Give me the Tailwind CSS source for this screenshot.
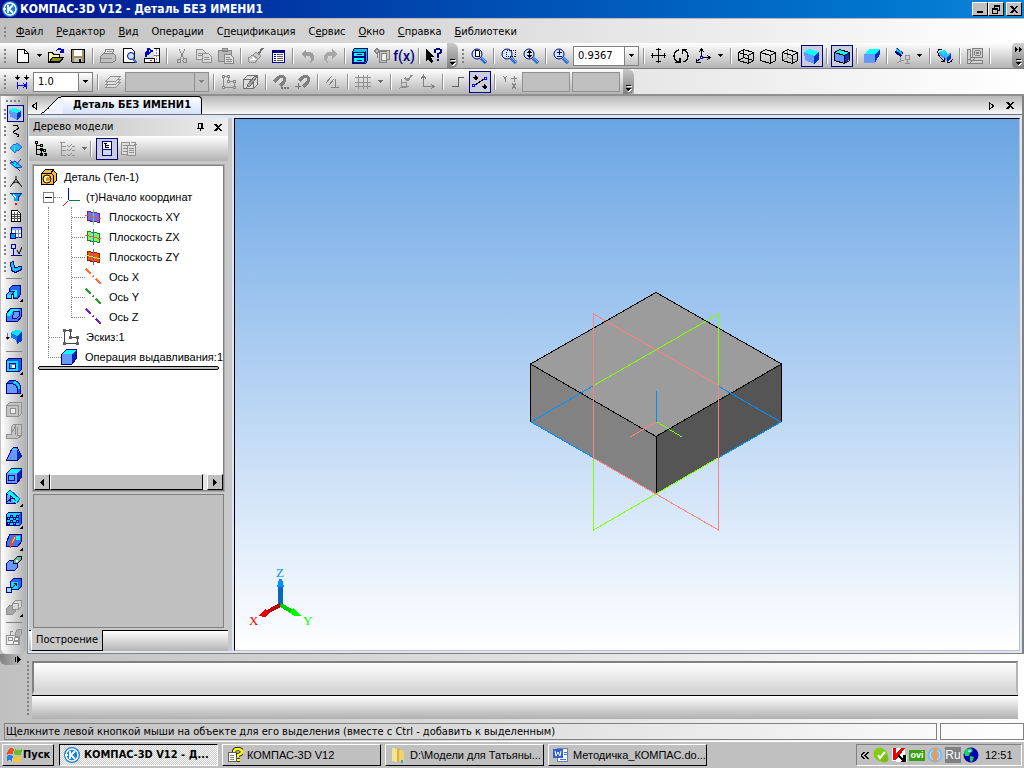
<!DOCTYPE html>
<html lang="ru">
<head>
  <meta charset="UTF-8" />
  <meta name="viewport" content="width=device-width, initial-scale=1.0" />
  <title>КОМПАС-3D V12 - Деталь БЕЗ ИМЕНИ1</title>
  <script src="https://cdn.jsdelivr.net/npm/@tailwindcss/browser@4"></script>
</head>
<body class="flex h-screen flex-col overflow-hidden bg-linear-to-r from-[#c0c0c0] to-white font-['DejaVu_Sans_Condensed','DejaVu_Sans',sans-serif] text-[11px] leading-4 text-black [&_svg]:shrink-0 [&_svg]:[shape-rendering:crispEdges]">

  <!-- Общие значки -->
  <svg class="hidden">
    <symbol id="lens" viewBox="0 0 16 16"><g shape-rendering="auto"><circle cx="6" cy="6" r="5" fill="#cfeaff" stroke="#000080"/><path d="M10 10l5 5" stroke="#2a6fd8" stroke-width="3.500"/><path d="M10 9l5 5" stroke="#8cc0f8"/></g></symbol>
    <symbol id="arrow" viewBox="0 0 5 3"><path d="M0 0h5v1H4v1H3v1H2V2H1V1H0z" fill="currentColor"/></symbol>
    <symbol id="cube" viewBox="0 0 16 16"><path d="M1 5l5-4h9l-4 4z" fill="#00ffff"/><path d="M1 5h10v10H1z" fill="#6699ff"/><path d="M11 5l4-4v9l-4 5z" fill="#0020c8"/><path d="M.5 5.500l5-5h10v9l-5 6H.5z" fill="none" stroke="#000080"/></symbol>
    <symbol id="shaded" viewBox="0 0 16 16"><path d="M0 4l5-3 10 3v1l-5 3z" fill="#00ffff"/><path d="M0 4l10 4v8L1 12z" fill="#6699ff"/><path d="M10 8l5-4v8l-5 4z" fill="#0033cc"/></symbol>
    <symbol id="kompas" viewBox="0 0 16 16"><circle cx="8" cy="8" r="8" fill="#1a7fd0"/><circle cx="8" cy="8" r="6" fill="none" stroke="#fff" stroke-width="1.4"/><path d="M6 4v8M11 4L7 8l4 4M1 8h3" fill="none" stroke="#fff" stroke-width="1.8"/></symbol>
    <symbol id="overflow" viewBox="0 0 7 8"><path d="M1 1h5v1H1zM1 4h5v1H5v1H4v1H3V6H2V5H1z" fill="#000"/><path d="M2 2h5v1H2zM5 5h2v1H5zM4 6h2v1H4zM3 7h2v1H3z" fill="#fff"/></symbol>
  </svg>

  <!-- Заголовок окна -->
  <header class="flex h-[18px] shrink-0 items-center bg-linear-to-r from-[#001090] to-[#1084d8] px-0.5 text-white">
    <svg class="size-4 [shape-rendering:auto]!"><use href="#kompas"/></svg>
    <h1 class="flex-1 pl-0.5 text-[12px] font-bold">КОМПАС-3D V12 - Деталь БЕЗ ИМЕНИ1</h1>
    <div class="flex [&>button]:flex [&>button]:h-[14px] [&>button]:w-4 [&>button]:items-center [&>button]:justify-center [&>button]:border [&>button]:border-t-white [&>button]:border-r-black [&>button]:border-b-black [&>button]:border-l-white [&>button]:bg-[#c0c0c0]">
      <button aria-label="Свернуть"><svg class="h-2 w-2" viewBox="0 0 8 8"><path d="M1 6h6v2H1z"/></svg></button>
      <button aria-label="Восстановить"><svg class="h-[9px] w-[9px]" viewBox="0 0 9 9"><path d="M2 0h6v2H2zM7 2h1v4H6V5h1zM2 2h1v1H2zM0 3h6v2H0zM0 5h1v4H0zM5 5h1v4H5zM1 8h4v1H1z"/></svg></button>
      <button aria-label="Закрыть" class="ml-0.5"><svg class="h-[7px] w-2" viewBox="0 0 8 7"><path d="M0 0h2l2 2 2-2h2L5 3.500l3 3.500H6L4 5 2 7H0l3-3.500z"/></svg></button>
    </div>
  </header>

  <!-- Главное меню -->
  <nav class="flex h-[25px] shrink-0 items-center border-t border-[#b8b8b8] pt-0.5 pl-1 [&>a]:ml-[13px]">
    <span class="h-[11px] w-0.5 bg-[repeating-linear-gradient(#808080_0_2px,transparent_2px_4px)]"></span>
    <a href="#" class="ml-2.5!"><u>Ф</u>айл</a>
    <a href="#"><u>Р</u>едактор</a>
    <a href="#"><u>В</u>ид</a>
    <a href="#">Опера<u>ц</u>ии</a>
    <a href="#">С<u>п</u>ецификация</a>
    <a href="#">С<u>е</u>рвис</a>
    <a href="#"><u>О</u>кно</a>
    <a href="#"><u>С</u>правка</a>
    <a href="#"><u>Б</u>иблиотеки</a>
  </nav>

  <!-- Панели инструментов -->
  <div class="flex h-[26px] shrink-0 border-b border-[#808080] [&_button]:flex [&_button]:h-[22px] [&_button]:w-[22px] [&_button]:shrink-0 [&_button]:items-center [&_button]:justify-center [&_hr]:mx-[3px] [&_hr]:h-4 [&_hr]:w-0.5 [&_hr]:shrink-0 [&_hr]:border-t-0 [&_hr]:border-r [&_hr]:border-l [&_hr]:border-r-white [&_hr]:border-l-[#909090]">
    <div class="flex shrink-0 items-center bg-linear-to-b from-white to-[#b4b4b4]">
      <span class="mr-1.5 ml-1 h-[14px] w-0.5 bg-[repeating-linear-gradient(#808080_0_2px,transparent_2px_4px)]"></span>
      <button aria-label="Создать"><svg class="size-4" viewBox="0 0 16 16"><path d="M2.500 1.500h7l4 4v9h-11z" fill="#fff" stroke="#000"/><path d="M9.500 1.500v4h4" fill="none" stroke="#000"/></svg></button>
      <button aria-label="Виды документов" class="w-[11px]!"><svg class="h-[3px] w-[5px]"><use href="#arrow"/></svg></button>
      <button aria-label="Открыть"><svg class="size-4" viewBox="0 0 16 16"><path d="M.5 13.500v-9h4l1 2h6v3h4l-4 5H.5z" fill="#fff9a0" stroke="#000"/><path d="M1.500 13.500l3-4h11l-4 4z" fill="#909020" stroke="#000"/><path d="M8 3l2-2h3l2 3m-3 0h3V1" fill="none" stroke="#0000c0" stroke-width="1.300"/></svg></button>
      <button aria-label="Сохранить"><svg class="size-4" viewBox="0 0 16 16"><path d="M1.500 1.500h13v13h-12l-1-1z" fill="#a09060" stroke="#000"/><path d="M4 2h8v6H4z" fill="#fff"/><path d="M4 10h8v4H4z" fill="#c0c0c0"/><path d="M9 11h2v3H9z"/></svg></button>
      <hr>
      <button aria-label="Печать"><svg class="size-4" viewBox="0 0 16 16"><path d="M4 7l2-6h8l-2 6z" fill="#e8e8e8" stroke="#808080"/><path d="M.5 8.500l3-3h10l2 2v5l-3 2H.5z" fill="#c0c0c0" stroke="#808080"/><path d="M1 10.500h11M7 3.500h5" stroke="#909090"/></svg></button>
      <button aria-label="Просмотр"><svg class="size-4" viewBox="0 0 16 16"><path d="M1.500.5h8l3 3v11h-11z" fill="#fff" stroke="#000"/><circle cx="9" cy="8" r="3.500" fill="#c8e4ff" stroke="#000080" shape-rendering="auto"/><path d="M11 11l4 4" stroke="#3070d0" stroke-width="2.500"/></svg></button>
      <button aria-label="Вывод в файл"><svg class="size-4" viewBox="0 0 16 16"><path d="M9.500.5h6v14h-6" fill="#fff" stroke="#000"/><path d="M12.500 1v13M10 7.500h5" stroke="#808080" stroke-dasharray="2 1"/><path d="M.5 10.500h10v4H.5z" fill="#fff" stroke="#000"/><path d="M6 12h2v1H6z" fill="red"/><path d="M2 9V5q0-2 2-2M4 0l4 3-4 3z" fill="none" stroke="#0000c0" stroke-width="1.500"/></svg></button>
      <hr>
      <button aria-label="Вырезать"><svg class="size-4" viewBox="0 0 16 16" fill="none" stroke="#888"><path d="M5 1l5 10M11 1L6 11"/><circle cx="5" cy="13" r="2"/><circle cx="11" cy="12.500" r="2"/></svg></button>
      <button aria-label="Копировать"><svg class="size-4" viewBox="0 0 16 16" fill="#dcdcdc" stroke="#909090"><path d="M.5 1.500h6l3 3v7h-9zM2 5.500h4M2 7.500h4"/><path d="M6.500 5.500h6l3 3v6h-9zM8 9.500h5M8 11.500h6"/></svg></button>
      <button aria-label="Вставить"><svg class="size-4" viewBox="0 0 16 16" fill="#b8b8b8" stroke="#888"><path d="M.5 2.500h13v11H.5zM4.500.5h5v3h-5z"/><path d="M6.500 6.500h6l3 3v6h-9z" fill="#ddd"/><path d="M8 9.500h4M8 11.500h6M8 13.500h6"/></svg></button>
      <hr>
      <button aria-label="Копировать свойства"><svg class="size-4" viewBox="0 0 16 16"><path d="M15 0l-5 6" stroke="#707070" stroke-width="2"/><path d="M8 4l5 4-3 3-5-4zM5 7l5 4-3 4-6-1-1-4z" fill="#c8c8c8" stroke="#909090"/><path d="M2 11l4 1M4 9l4 3" stroke="#fff"/></svg></button>
      <button aria-label="Свойства"><svg class="size-4" viewBox="0 0 16 16"><path d="M2.500 2.500h12v12h-12z" fill="#fff" stroke="#000080"/><path d="M2 2h13v3H2z" fill="#000080"/><path d="M4 6.500h2M4 8.500h2M4 10.500h2M4 12.500h2" stroke="#00c"/><path d="M7 6.500h6M7 8.500h6M7 10.500h6M7 12.500h6" stroke="#606060"/></svg></button>
      <hr>
      <button aria-label="Отменить"><svg class="size-4" viewBox="0 0 16 16"><path d="M6 1v3h4q4 1 4 6 0 3-4 5 2-6-1-7H6v3L1 6z" fill="#9c9c9c"/></svg></button>
      <button aria-label="Повторить"><svg class="size-4" viewBox="0 0 16 16"><path d="M10 1v3H6q-4 1-4 6 0 3 4 5-2-6 1-7h3v3l5-5z" fill="#a8a8a8"/></svg></button>
      <hr>
      <button aria-label="Менеджер библиотек"><svg class="size-4" viewBox="0 0 16 16"><path d="M.5 3.500l2-3h13v12l-2 3H.5z" fill="#00c8d0" stroke="#000080"/><path d="M1.500 4.500h11v4h-11zM1.500 9.500h11v5h-11z" fill="#00ffff" stroke="#000080"/><path d="M4.500 6.500h5M4.500 12.500h5M13.500 3v11" stroke="#000080"/></svg></button>
      <button aria-label="Дерево"><svg class="size-4" viewBox="0 0 16 16" fill="#c8c8c8" stroke="#808080"><path d="M5.500 2.500h10v9h-3v3h-7z"/><path d="M7.500 5.500h5v7h-5z" fill="#eee"/><circle cx="3" cy="3" r="2" stroke-width="1.500"/><path d="M5 3h8M3.500 5v5"/></svg></button>
      <button aria-label="Переменные" class="font-['Roboto'] text-[14px] font-medium text-[#000080]">f(x)</button>
      <hr>
      <button aria-label="Справка"><svg class="h-4 w-[17px]" viewBox="0 0 17 16"><path d="M0 1l8 8H5l2 4-2 2-3-4-2 2z"/><path d="M9 5V3q0-2 3-2t3 2q0 2-3 3v4M11 12h2" fill="none" stroke="#000080" stroke-width="2"/></svg></button>
      <span class="ml-0.5 flex h-full w-[11px] items-end justify-center rounded-r-md bg-linear-to-b from-[#c8c8c8] to-[#808080] pb-0.5"><svg class="h-2 w-[7px]"><use href="#overflow"/></svg></span>
    </div>

    <div class="flex flex-1 items-center bg-linear-to-b from-white to-[#b4b4b4]">
      <span class="mr-1 ml-1 h-[14px] w-0.5 bg-[repeating-linear-gradient(#808080_0_2px,transparent_2px_4px)]"></span>
      <button aria-label="Показать все"><svg class="size-4" viewBox="0 0 16 16"><use href="#lens"/><path d="M4.500 2.500h3l1 1v5h-4z" fill="#fff" stroke="#000"/></svg></button>
      <hr>
      <button aria-label="Увеличить рамкой"><svg class="size-4" viewBox="0 0 16 16"><use href="#lens"/><path d="M5.500 2.500h9v6h-9z" fill="none" stroke="#000" stroke-dasharray="1 1"/></svg></button>
      <button aria-label="Масштаб"><svg class="size-4" viewBox="0 0 16 16"><use href="#lens"/><path d="M6 2h1v8H6zM5 3h3v1H5zM4 4h5v1H4zM4 7h5v1H4zM5 8h3v1H5z"/></svg></button>
      <hr>
      <button aria-label="Масштаб по значению"><svg class="size-4" viewBox="0 0 16 16"><use href="#lens"/><path d="M6.500 2v5M4 4.500h5M4 8.500h5" stroke="#000080"/></svg></button>
      <div class="relative mx-px h-5 w-[66px] shrink-0">
        <select aria-label="Текущий масштаб" class="h-5 w-full appearance-none border border-[#808080] bg-white pl-1"><option>0.9367</option></select>
        <span class="pointer-events-none absolute inset-y-px right-px flex w-[14px] items-center justify-center border-l border-[#808080] bg-linear-to-b from-white to-[#c4c4c4]"><svg class="h-[3px] w-[5px]"><use href="#arrow"/></svg></span>
      </div>
      <hr>
      <button aria-label="Сдвинуть"><svg class="size-4" viewBox="0 0 16 16"><path d="M7 2v5H2V5H1v2H0v1h1v2h1V8h5v5H5v1h2v1h1v-1h2v-1H8V8h5v2h1V8h1V7h-1V5h-1v2H8V2h2V1H8V0H7v1H5v1z"/></svg></button>
      <button aria-label="Повернуть"><svg class="size-4" viewBox="0 0 16 16" fill="none" stroke="#000" stroke-width="1.300"><path d="M6 2Q1 3 1 8t5 6M2 14.500h5V10M10 14q5-1 5-6t-5-6M14 1.500H9.500V6"/></svg></button>
      <button aria-label="Ориентация"><svg class="size-4" viewBox="0 0 16 16" fill="none" stroke="#000"><path d="M6.500 9V1M4 4l2.500-3L9 4M7 9.500h8M12 7l3 2.500L12 12M6 10l-5 4M1.500 11v3.500h4"/><path d="M5.500 8.500h2v2h-2z" fill="#fff" stroke="#00f"/></svg></button>
      <button aria-label="Список ориентаций" class="w-[13px]!"><svg class="h-[3px] w-[5px]"><use href="#arrow"/></svg></button>
      <hr>
      <button aria-label="Каркас"><svg class="size-4" viewBox="0 0 16 16" fill="none" stroke="#000"><path d="M.5 4.500l5-3 10 3v8l-5 3-10-3zM.5 4.500l10 3v8M10.500 7.500l5-3M5.500 1.500v8l10 3M5.500 9.500l-5 3"/></svg></button>
      <button aria-label="Без невидимых линий"><svg class="size-4" viewBox="0 0 16 16" fill="none" stroke="#000"><path d="M.5 4.500l5-3 10 3v8l-5 3-10-3zM.5 4.500l10 3v8M10.500 7.500l5-3"/></svg></button>
      <button aria-label="Невидимые линии тонкие"><svg class="size-4" viewBox="0 0 16 16" fill="none" stroke="#000"><path d="M5.500 1.500v8l10 3M5.500 9.500l-5 3" stroke="#909090"/><path d="M.5 4.500l5-3 10 3v8l-5 3-10-3zM.5 4.500l10 3v8M10.500 7.500l5-3"/></svg></button>
      <button aria-label="Полутоновое" aria-pressed="true" class="border border-[#000080] bg-[#ccccdf]"><svg class="size-4"><use href="#shaded"/></svg></button>
      <hr>
      <button aria-label="Полутоновое с каркасом" aria-pressed="true" class="border border-[#000080] bg-[#ccccdf]"><svg class="size-4" viewBox="0 0 16 16"><use href="#shaded"/><path d="M.5 4.500l5-3 10 3v8l-5 3-10-3zM.5 4.500l10 3v8M10.500 7.500l5-3" fill="none" stroke="#000"/></svg></button>
      <hr>
      <button aria-label="Упрощенное"><svg class="size-4" viewBox="0 0 16 16"><path d="M0 6L6 1h10l-5 5z" fill="#00ffff"/><path d="M0 6h11v9H0z" fill="#6699ff"/><path d="M11 6l5-5v5l-5 9z" fill="#0033cc"/></svg></button>
      <hr>
      <button aria-label="Перспектива"><svg class="size-4" viewBox="0 0 16 16"><path d="M2 2l6 5" stroke="#000080" stroke-width="5"/><path d="M2 1l6 5" stroke="#00c8ff" stroke-width="2"/><path d="M11.500 7.500h4v4h-4zM13.500 12v3M11 15.500h5M6.500 9v4l-3 2M6 12.500h4" fill="none" stroke="#909090"/></svg></button>
      <button aria-label="Параметры вида" class="w-[13px]!"><svg class="h-[3px] w-[5px]"><use href="#arrow"/></svg></button>
      <hr>
      <button aria-label="Перестроить"><svg class="size-4" viewBox="0 0 16 16"><path d="M2 4l5-2 3 4 4-1v5l-4 4-4-4-3-2z" fill="#5090ff"/><path d="M2 4l5-2 3 3-4 3zM7 8l4-2h3l-4 3z" fill="#00e0ff"/><path d="M10 9l4-3v4l-4 4z" fill="#0030d0"/><path d="M5 1Q0 1 1 5t6 8M15 10q1 4-5 5M4 13.500h3.500V10" fill="none" stroke="#000"/></svg></button>
      <hr>
      <button aria-label="Библиотека"><svg class="size-4" viewBox="0 0 16 16" fill="#d0d0d0" stroke="#808080"><path d="M.5 1.500h3v11h12v3h-15zM5.500.5h10v9h-10z"/><circle cx="10.500" cy="5" r="3"/><circle cx="10.500" cy="5" r="1"/><path d="M1 12l5-3M3 15l5-5"/></svg></button>
      <hr>
      <span class="ml-auto flex h-full w-3 flex-col items-center justify-between rounded-l-sm bg-linear-to-b from-[#d0d0d0] to-[#808080] pt-1 pb-0.5"><svg class="h-[5px] w-[7px]" viewBox="0 0 7 5"><path d="M0 0l3 2.500L0 5zM4 0l3 2.500L4 5z"/></svg><svg class="h-2 w-[7px]"><use href="#overflow"/></svg></span>
    </div>
  </div>

  <div class="flex h-[27px] shrink-0 border-b-2 border-[#909090] [&_button]:flex [&_button]:h-[22px] [&_button]:w-[22px] [&_button]:shrink-0 [&_button]:items-center [&_button]:justify-center [&_hr]:mx-[3px] [&_hr]:h-4 [&_hr]:w-0.5 [&_hr]:shrink-0 [&_hr]:border-t-0 [&_hr]:border-r [&_hr]:border-l [&_hr]:border-r-white [&_hr]:border-l-[#909090]">
    <div class="flex shrink-0 items-center bg-linear-to-b from-white to-[#b4b4b4]">
      <span class="mr-[5px] ml-1 h-[14px] w-0.5 bg-[repeating-linear-gradient(#808080_0_2px,transparent_2px_4px)]"></span>
      <button aria-label="Шаг курсора"><svg class="size-4" viewBox="0 0 16 16" fill="none"><path d="M1 3.500h5M3.500 1v5M10 3.500h5M12.500 1v5" stroke="#000"/><path d="M2 2.500h3v2H2zM11 2.500h3v2h-3z" fill="#000"/><path d="M3.500 8v7M12.500 8v7M4 11.500h8M9 9l3 2.500L9 14" stroke="#00f"/></svg></button>
      <div class="relative mr-px h-5 w-[60px] shrink-0">
        <select aria-label="Шаг" class="h-5 w-full appearance-none border border-[#808080] bg-white pl-1"><option>1.0</option></select>
        <span class="pointer-events-none absolute inset-y-px right-px flex w-[14px] items-center justify-center border-l border-[#808080] bg-linear-to-b from-white to-[#c4c4c4]"><svg class="h-[3px] w-[5px]"><use href="#arrow"/></svg></span>
      </div>
      <hr>
      <button aria-label="Слои"><svg class="size-4" viewBox="0 0 16 16" fill="#e0e0e0" stroke="#909090"><path d="M5.500 8.500h10l-5 5H.5z"/><path d="M5.500 5.500h10l-5 5H.5z"/><path d="M5.500 2.500h10l-5 5H.5z"/></svg></button>
      <div class="relative mx-px h-5 w-[84px] shrink-0">
        <select aria-label="Слой" disabled class="h-5 w-full appearance-none border border-[#909090] bg-[#c0c0c0]"></select>
        <span class="pointer-events-none absolute inset-y-px right-px flex w-[14px] items-center justify-center border-l border-[#909090] text-[#808080]"><svg class="h-[3px] w-[5px]"><use href="#arrow"/></svg></span>
      </div>
      <hr>
      <button aria-label="Эскиз"><svg class="size-4" viewBox="0 0 16 16" fill="#888" stroke="#888"><path d="M2.500 2.500h5v5h6v6h-11z" fill="none"/><path d="M1.500 1.500h2v2h-2zM6.500 1.500h2v2h-2zM6.500 6.500h2v2h-2zM12.500 6.500h2v2h-2zM1.500 12.500h2v2h-2zM12.500 12.500h2v2h-2z" fill="#ddd"/></svg></button>
      <button aria-label="Правка эскиза"><svg class="size-4" viewBox="0 0 16 16" fill="#ddd" stroke="#707070"><path d="M.5 5.500l4-4h10v9l-4 4H.5zM.5 5.500h10v9M10.500 5.500l4-4"/><path d="M12 2l2 1-7 9-3 1 1-3z" fill="#aaa"/></svg></button>
      <hr>
      <button aria-label="Привязки"><svg class="size-4" viewBox="0 0 16 16"><path d="M1 8l5-5q3-2 5 0t0 5l-4 4" fill="none" stroke="#808080" stroke-width="3"/><path d="M8 13h2v2H8zM11 13h2v2h-2zM14 13h2v2h-2z" fill="#707070"/></svg></button>
      <button aria-label="Запретить привязки"><svg class="size-4" viewBox="0 0 16 16"><path d="M4 7l4-4q3-2 5 0t0 5l-5 5" fill="none" stroke="#808080" stroke-width="3"/><path d="M0 12.500h6M3.500 9v6" stroke="#707070"/></svg></button>
      <hr>
      <button aria-label="Ортогональность"><svg class="size-4" viewBox="0 0 16 16" fill="none" stroke="#808080"><path d="M1 9l6-7M4 11l5-6M10.500 5v9M6 13.500h8"/></svg></button>
      <hr>
      <button aria-label="Сетка"><svg class="size-4" viewBox="0 0 16 16" fill="none" stroke="#909090"><path d="M0 3.500h16M0 8.500h16M0 12.500h16M3.500 1v14M8.500 1v14M12.500 1v14"/></svg></button>
      <button aria-label="Параметры сетки" class="w-[13px]!"><svg class="h-[3px] w-[5px] text-[#707070]"><use href="#arrow"/></svg></button>
      <hr>
      <button aria-label="Локальная СК"><svg class="size-4" viewBox="0 0 16 16" fill="none" stroke="#909090"><path d="M3.500 5v7h7M4 12l-3 3M2.500 8.500h6v5h-6M6 4l3 3 5-6"/><path d="M7 4l3 2 4-5" stroke-width="2"/></svg></button>
      <button aria-label="Система координат"><svg class="size-4" viewBox="0 0 16 16" fill="none" stroke="#808080"><path d="M3.500 2v10.500H14M1 5l2.500-4L6 5M11 10l3 2.500-3 2.500"/></svg></button>
      <hr>
      <button aria-label="Ломаная"><svg class="size-4" viewBox="0 0 16 16" fill="none" stroke="#606060"><path d="M2 12.500h6.500v-9H14"/></svg></button>
      <button aria-label="Округление" aria-pressed="true" class="border border-[#000080] bg-[#ccccdf]"><svg class="size-4" viewBox="0 0 16 16" fill="none" stroke="#000"><path d="M3 11l9-6M1 3.500h5M3.500 1v5M10 12.500h5M12.500 10v5"/><path d="M3 2h1v3H3zM2 3h3v1H2zM12 11h1v3h-1zM11 12h3v1h-3z"/><path d="M.5 10.500h2v2h-2zM12.500 3.500h2v2h-2z" fill="#fff" stroke="#00f"/></svg></button>
      <hr>
      <button aria-label="Координаты"><svg class="size-4" viewBox="0 0 16 16" fill="none" stroke="#808080"><path d="M1 2l2 2.500V8M5 2L3 4.500M10 9l4 6M14 9l-4 6M9 4.500h6M12.500 2v6"/></svg></button>
      <input aria-label="Координата X" disabled class="mx-px h-5 w-12 border border-[#909090] bg-[#c0c0c0]" />
      <input aria-label="Координата Y" disabled class="mx-px h-5 w-12 border border-[#909090] bg-[#c0c0c0]" />
      <span class="ml-0.5 flex h-full w-[11px] items-end justify-center rounded-r-md bg-linear-to-b from-[#c8c8c8] to-[#808080] pb-0.5"><svg class="h-2 w-[7px]"><use href="#overflow"/></svg></span>
    </div>
  </div>

  <main class="flex min-h-0 flex-1">
    <!-- Компактная панель -->
    <aside class="flex w-[27px] shrink-0 flex-col pb-[54px]">
      <div class="ml-px flex min-h-0 w-[25px] flex-1 flex-col items-center rounded-b-md bg-linear-to-r from-white to-[#b0b0b0] pt-1 [&>button]:flex [&>button]:h-[22px] [&>button]:w-full [&>button]:shrink-0 [&>button]:items-center [&>button]:justify-center [&>hr]:my-[3px] [&>hr]:w-4 [&>hr]:border-[#808080]">
        <span class="mb-[3px] h-0.5 w-4 shrink-0 bg-[repeating-linear-gradient(90deg,#808080_0_2px,transparent_2px_4px)]"></span>
        <!-- Переключатели панелей -->
        <div class="flex w-full shrink-0 flex-col pl-[3px] [&_button]:flex [&_button]:h-[17px] [&_button]:w-[17px] [&_button]:items-center [&_button]:justify-center [&_i]:h-[10px] [&_i]:w-0.5 [&_i]:bg-[repeating-linear-gradient(#808080_0_2px,transparent_2px_4px)] [&>div]:flex [&>div]:h-[17px] [&>div]:items-center [&>div]:gap-px">
          <div><i></i><button aria-label="Редактирование детали" aria-pressed="true" class="border border-[#000080] bg-[#ccccdf]"><svg class="size-[13px]"><use href="#shaded"/></svg></button></div>
          <div><i></i><button aria-label="Кривые"><svg class="size-3" viewBox="0 0 12 12"><path d="M3 .5h4l1.500 2-1 2-3 1-1 2 1 1 4 1v2H7" fill="none" stroke="#000"/></svg></button></div>
          <div><i></i><button aria-label="Поверхности"><svg class="size-3" viewBox="0 0 12 12"><path d="M0 6l4-4 1 1 2-2 5 4-4 4-1-1-2 3z" fill="#30b0ff"/><path d="M0 6l4-4 1 1 2-2 5 4-4 4-1-1-2 3z" fill="none" stroke="#0040c0" stroke-width=".7" shape-rendering="auto"/><path d="M4.500 3v6" stroke="#00ffff"/></svg></button></div>
          <div><i></i><button aria-label="Вспомогательная геометрия"><svg class="size-3" viewBox="0 0 12 12"><path d="M0 4l5-2 7 6-6 1z" fill="#00e0ff"/><path d="M0 4l5-2 7 6-6 1zM11 0L6 6M6 8l4 4M0 1l4 4" fill="none" stroke="#0000c0" stroke-width=".8" shape-rendering="auto"/></svg></button></div>
          <div><i></i><button aria-label="Измерения"><svg class="size-3" viewBox="0 0 12 12" fill="none" stroke="#000"><path d="M6 0v3L0 11M6 3l6 8M2 8q4-4 8 0" shape-rendering="auto"/></svg></button></div>
          <div><i></i><button aria-label="Фильтры"><svg class="size-3" viewBox="0 0 12 12"><path d="M0 0h12v1L8 5v3H4V5L0 1z" fill="#10a0f0"/><path d="M0 .5h12M11 1L8 5v3" fill="none" stroke="#003090"/><path d="M3 1l3 4" stroke="#c0f0ff"/><path d="M5 10h2v2H5z" fill="red"/></svg></button></div>
          <div><i></i><button aria-label="Спецификация"><svg class="size-3" viewBox="0 0 12 12"><path d="M1.500.5h6l3 3v8h-9z" fill="#fff" stroke="#000"/><path d="M2 4.500h8M2 6.500h8M2 8.500h8M4.500 2v9M7.500 2v9" stroke="#505050"/></svg></button></div>
          <div><i></i><button aria-label="Отчеты"><svg class="size-3" viewBox="0 0 12 12"><path d="M1.500.5h10v10h-10z" fill="#fff" stroke="#0000a0"/><path d="M2 1h9v2H2z" fill="#80a8ff"/><path d="M2 6.500h9M8.500 3v8M5.500 3v8" stroke="#8080c0"/><path d="M.5 6.500h5v5h-5z" fill="#00a0f0" stroke="#000080"/></svg></button></div>
          <div><i></i><button aria-label="Оформление"><svg class="size-3" viewBox="0 0 12 12" fill="none" stroke="#0000a0"><path d="M1.500.5h4v4h-4zM3.500 5v6M1 11.500h11"/><path d="M7 6l2 4 3-7" stroke="#000" shape-rendering="auto"/></svg></button></div>
          <div><i></i><button aria-label="Листовое тело"><svg class="size-3" viewBox="0 0 12 12"><path d="M.5 1.500l3-1 1 6 7-1v3l-6 3-4-2z" fill="#00c8ff" stroke="#000080"/></svg></button></div>
        </div>
        <hr>
        <button aria-label="Выдавливание"><svg class="size-[18px]" viewBox="0 0 18 18"><path d="M4.500 4.500l3-3h8v9l-3 4h-4v-4h-4z" fill="#2068f0" stroke="#000080"/><path d="M6 6h6v7H9V9H6z" fill="#00ffff"/><path d="M1.500 10.500l3-3h5l-3 3v4h-5z" fill="#60a0ff" stroke="#000080"/><path d="M2 11h4v3H2z" fill="#00ffff"/><path d="M18 14v4h-4z"/></svg></button>
        <button aria-label="Вырезать выдавливанием"><svg class="size-4" viewBox="0 0 16 16"><path d="M.5 6.500l4-5h11v8l-4 5H.5z" fill="#4080ff" stroke="#000080"/><path d="M5 2h8l-2 3H6L5 9H1V6z" fill="#00ffff"/><path d="M7.500 4.500h6v4l-3 3h-4z" fill="#6699ff" stroke="#000080"/></svg></button>
        <button aria-label="Придать толщину"><svg class="size-4" viewBox="0 0 16 16"><path d="M5 3q5-3 11-1v10l-5 3q0-5-6-6z" fill="#1878f0"/><path d="M5 3q5-3 11-1l-5 6q-2-3-6-4z" fill="#00e0ff"/><path d="M11 8l5-6v10l-5 3z" fill="#0038c8"/><path d="M1.500 4v6M0 8h3v1H2v1H1V9H0z" stroke="#000" stroke-width=".5"/></svg></button>
        <hr>
        <button aria-label="Отверстие"><svg class="size-[18px]" viewBox="0 0 18 18"><path d="M1.500 3.500l2-2h13v11l-2 2h-13z" fill="#1060e0" stroke="#000080"/><path d="M2 4h11v10H2z" fill="#00e0ff"/><path d="M4.500 6.500h6v5h-6z" fill="#6090ff" stroke="#000080"/><path d="M7 8h3v3H7z" fill="#fff"/><path d="M18 14v4h-4z"/></svg></button>
        <button aria-label="Скругление"><svg class="size-[18px]" viewBox="0 0 18 18"><path d="M1.500 4.500l3-3h5q6 1 6 8v5h-14z" fill="#0060ff" stroke="#000080"/><path d="M9 2q6 1 6 8h-2q0-5-5-6z" fill="#00e0ff"/><path d="M1.500 4.500h5q5 1 6 6v4h-11z" fill="#6699ff" stroke="#000080"/><path d="M18 14v4h-4z"/></svg></button>
        <button aria-label="Отверстие из библиотеки"><svg class="size-4" viewBox="0 0 16 16" fill="#c4c4c4" stroke="#909090"><path d="M.5 3.500l3-3h12v11l-3 3H.5zM.5 3.500h12v11"/><circle cx="7" cy="9" r="3" fill="#eee"/></svg></button>
        <button aria-label="Ребро жесткости"><svg class="size-4" viewBox="0 0 16 16" fill="#c4c4c4" stroke="#909090"><path d="M5.500 2.500l2-2h8v11l-4 3H.5v-4h5z"/><path d="M5 10l4-7v8M11.500 3v8h3" fill="none"/></svg></button>
        <button aria-label="Уклон"><svg class="size-4" viewBox="0 0 16 16"><path d="M5.500 3.500l2-2h4l4 9-4 4H.5z" fill="#6699ff" stroke="#000080"/><path d="M11 3l4 7-4 4z" fill="#0030c0"/><path d="M6 3.500h4" stroke="#00ffff"/></svg></button>
        <button aria-label="Оболочка"><svg class="size-4" viewBox="0 0 16 16"><use href="#cube"/><path d="M2.500 7.500h6v5h-6z" fill="#00d0ff" stroke="#000080"/><path d="M3 12l3-3h2v3z" fill="#6699ff"/></svg></button>
        <button aria-label="Сечение"><svg class="size-[18px]" viewBox="0 0 18 18"><path d="M1.500 4.500l4 2 5 8h-9z" fill="#6699ff" stroke="#000080"/><path d="M2 4l3-3 10 9-3 4-4-1z" fill="#00ffff"/><path d="M2 4l3-3 10 9-3 4" fill="none" stroke="#0050c0"/><path d="M5.500 6v7M5 6l6 6M2 13l5-4h3" fill="none" stroke="#000080"/><path d="M18 14v4h-4z"/></svg></button>
        <button aria-label="Массив по сетке"><svg class="size-[18px]" viewBox="0 0 18 18"><path d="M1.500 3.500l2-2h13v11l-2 2h-13z" fill="#00d8ff" stroke="#000080"/><path d="M13 4l3-2v10l-2 2z" fill="#1060f0"/><g fill="#80a8ff" stroke="#000080"><path d="M2.500 6.500h2v2h-2zM8.500 6.500h2v2h-2zM2.500 11.500h2v2h-2zM8.500 11.500h2v2h-2zM5.500 4.500h2v2h-2zM11.500 4.500h2v2h-2zM5.500 9.500h2v2h-2zM11.500 9.500h2v2h-2z"/></g><path d="M18 14v4h-4z"/></svg></button>
        <button aria-label="Линия разъема"><svg class="size-[18px]" viewBox="0 0 18 18"><path d="M1.500 9.500l3-8h12v7l-4 5h-11z" fill="#3878f0" stroke="#000080"/><path d="M11 3h4v4h-4z" fill="#00ffff"/><path d="M5 16V9l5-7h2L9 9z" fill="#ff4020"/><path d="M10 4l-3 6" stroke="#ffe060"/><path d="M18 14v4h-4z"/></svg></button>
        <button aria-label="Деталь-заготовка"><svg class="size-4" viewBox="0 0 16 16"><path d="M.5 7.500l3-3h8v7l-3 3h-8z" fill="#6699ff" stroke="#000080"/><path d="M8 8l-1-3 4-4 4-1 1 3-4 4z" fill="#60c0b0" stroke="#000"/><path d="M10 4h2v2h-2z" fill="#fff"/></svg></button>
        <button aria-label="Булева операция"><svg class="size-4" viewBox="0 0 16 16"><path d="M4.500 3.500l3-3h8v8l-3 3h-8z" fill="#2068f0" stroke="#000080"/><path d="M5 4h7v7H5z" fill="#00e0ff"/><path d="M.5 9.500h5v5h-5z" fill="#8fdcff" stroke="#000080"/><path d="M6 10l4-4M8 5.500h2.500V8" stroke="#000" fill="none"/></svg></button>
        <button aria-label="Масштабирование"><svg class="size-[18px]" viewBox="0 0 18 18"><g fill="#d8d8d8" stroke="#909090"><path d="M1.500 9.500l3-3h6v6l-3 3h-6z" fill="#a8a8a8"/><path d="M7.500 4.500l3-3h6v6l-3 3h-6zM7.500 4.500h6v6"/></g><path d="M18 14v4h-4z"/></svg></button>
        <hr>
        <button aria-label="Компоновка"><svg class="size-4" viewBox="0 0 16 16" fill="#f0f0f0" stroke="#909090"><path d="M.5 6.500h13v9H.5zM2.500 8.500h4v3h-4zM8.500 8.500h4v3h-4zM7.500 12.500h5v3h-5z"/><path d="M9.500 3.500l2-3h4v5l-2 2h-4z" fill="#b0b0b0"/><path d="M4.500 6V2.500H7" fill="none"/></svg></button>
      </div>
      <span class="flex h-[11px] w-[25px] shrink-0 items-center justify-end rounded-bl-md bg-linear-to-r from-[#808080] to-[#c8c8c8] pr-1"><svg class="h-[7px] w-[6px]" viewBox="0 0 6 7"><path d="M0 1h1v5H0zM2 0l4 3.500L2 7z"/></svg></span>
    </aside>

    <div class="flex min-w-0 flex-1 flex-col">
      <section class="flex min-h-0 flex-1 flex-col border border-t-0 border-r-2 border-[#808080] bg-[#dbe6f8]">
        <!-- Вкладки документов -->
        <div class="flex h-[19px] shrink-0 items-end border-b border-[#707070] bg-linear-to-b from-[#b8b8b8] to-[#f8f8f8]">
          <button aria-label="Влево" class="flex h-[17px] w-[13px] items-center justify-center"><svg class="h-2 w-[5px]" viewBox="0 0 5 8"><path d="M4.500.5v7L.5 4z" fill="none" stroke="#000"/></svg></button>
          <svg class="h-[18px] w-[22px]" viewBox="0 0 22 18"><path d="M0 18C6 16 14 3 18 1.500L22 .5V18z" fill="#eef3fd"/><path d="M0 17.500C6 16 14 3 18 1.500L22 .5" fill="none" stroke="#000"/></svg>
          <h2 class="h-[18px] rounded-tr-sm border-t border-r border-black bg-linear-to-b from-white to-[#d4e2fa] px-2.5 text-[11px] leading-4 font-bold">Деталь БЕЗ ИМЕНИ1</h2>
          <span class="ml-auto flex h-[17px] items-center gap-3 pr-2">
            <button aria-label="Вправо"><svg class="h-2 w-[5px]" viewBox="0 0 5 8"><path d="M.5.5v7L4.500 4z" fill="none" stroke="#000"/></svg></button>
            <button aria-label="Закрыть документ"><svg class="h-[7px] w-2" viewBox="0 0 8 7"><path d="M0 0h2l2 2 2-2h2L5 3.500l3 3.500H6L4 5 2 7H0l3-3.500z"/></svg></button>
          </span>
        </div>

        <div class="flex min-h-0 flex-1 pt-[3px] pb-0.5">
          <!-- Дерево модели -->
          <div class="ml-px flex w-[203px] shrink-0 flex-col border-r-4 border-[#c8c8c8] bg-[#c8c8c8]">
            <div class="flex h-[18px] shrink-0 items-center bg-linear-to-r from-[#c0c0c0] to-[#ececec] pr-1.5 pl-1">
              <h3 class="flex-1">Дерево модели</h3>
              <button aria-label="Закрепить"><svg class="h-2 w-[7px]" viewBox="0 0 7 8"><path d="M1 0h5v5h1v1H4v2H3V6H0V5h1zM2 1v4h2V1z"/></svg></button>
              <button aria-label="Закрыть дерево" class="ml-2.5"><svg class="h-[7px] w-2" viewBox="0 0 8 7"><path d="M0 0h2l2 2 2-2h2L5 3.500l3 3.500H6L4 5 2 7H0l3-3.500z"/></svg></button>
            </div>
            <div class="flex h-[25px] shrink-0 items-center bg-linear-to-b from-white to-[#b4b4b4] pl-px [&>button]:flex [&>button]:h-[22px] [&>button]:w-[22px] [&>button]:items-center [&>button]:justify-center">
              <button aria-label="Структура"><svg class="h-4 w-3" viewBox="0 0 12 16"><path d="M1.500 2v11.500H5M2 4.500h3M2 8.500h3M6.500 9v5" fill="none" stroke="#000"/><path d="M0 0h3v3H0zM4.500 3h3v3h-3zM4.500 7h3v3h-3zM8 8h3v3H8zM4.500 12h3v3h-3zM8.500 12h3v3h-3z"/><path d="M1 1h1v1H1zM6 4h1v1H6zM9 9h1v1H9zM9 13h1v1H9z" fill="#9f9"/></svg></button>
              <button aria-label="Состав" class="ml-1"><svg class="h-4 w-[15px]" viewBox="0 0 15 16" fill="none" stroke="#909090"><path d="M0 1.500h5M1.500 2v12.500M2 5.500h4M2 9.500h4M2 14.500h4M7 4l2 2 3-3M7 8l2 2 3-3M7 13l2 2 3-3M12 5.500h3M12 9.500h3M12 14.500h3"/></svg></button>
              <button aria-label="Список" class="w-3!"><svg class="h-[3px] w-[5px] text-[#707070]"><use href="#arrow"/></svg></button>
              <span class="mr-1 h-4 w-0.5 border-r border-l border-r-white border-l-[#909090]"></span>
              <button aria-label="Отображение структуры" aria-pressed="true" class="border border-[#000080] bg-[#ccccdf]"><svg class="h-4 w-[10px]" viewBox="0 0 10 16"><path d="M.5.5h9v14h-9zM.5 8.500h9" fill="#fff" stroke="#000080"/><path d="M1 9h8v5H1z" fill="#d0d8f0"/><path d="M2 2.500h3M3.500 3v3.500H7M4 4.500h3" stroke="#000" fill="none"/></svg></button>
              <button aria-label="Дополнительное окно"><svg class="size-4" viewBox="0 0 16 16" fill="#ddd" stroke="#909090"><path d="M.5 1.500h8v12h-8z"/><path d="M2 4.500h4M2 7.500h4M2 10.500h4"/><path d="M6.500 4.500h8v10h-8z"/><path d="M8 7.500h5M8 9.500h5M8 11.500h5M10 1.500h4.500V5M13 3l1.500 2L16 3" fill="none"/></svg></button>
            </div>
            <div class="mx-1 mt-1 flex min-h-0 flex-1 flex-col border border-[#808080] bg-white pt-px font-['Liberation_Sans'] outline outline-[#a8a8a8] [&_li]:flex [&_li]:h-5 [&_li]:items-center [&_li]:whitespace-nowrap">
              <ul class="pl-1.5">
                <li><svg class="mr-1.5 h-[18px] w-[18px]" viewBox="0 0 18 18"><path d="M1.500 5.500l4-4h7l4 4v7l-4 4h-11z" fill="#ffb840" stroke="#000"/><path d="M1.500 5.500h10l2 2v9M11 5l3-4" fill="none" stroke="#000"/><circle cx="7" cy="11" r="4" fill="#fff0b0" stroke="#000" shape-rendering="auto"/><circle cx="8" cy="11" r="2" fill="#e09020"/></svg>Деталь (Тел-1)</li>
              </ul>
              <ul class="pl-[14px]">
                <li><button aria-label="Свернуть ветвь" class="-ml-[5px] flex h-[11px] w-[11px] shrink-0 items-center justify-center border border-[#808080] bg-white"><svg class="h-px w-[7px]" viewBox="0 0 7 1"><path d="M0 0h7v1H0z"/></svg></button><span class="w-2 border-t border-dotted border-[#808080]"></span><svg class="mr-1.5 h-[18px] w-[18px]" viewBox="0 0 18 18" fill="none"><path d="M6.500 0v12" stroke="#00f"/><path d="M7 12.500h11" stroke="#008040"/><path d="M6 13l-5 5" stroke="red"/></svg>(т)Начало координат</li>
                <li><i class="h-full w-[23px] border-l border-dotted border-[#808080]"></i><i class="h-full w-[14px] border-l border-dotted border-[#808080]"><span class="block h-[11px] border-b border-dotted border-[#808080]"></span></i><svg class="mr-2 h-4 w-4" viewBox="0 0 16 16"><path d="M2.500 2.500l12 2v9l-12-2z" fill="#7070ff" stroke="#602080"/><path d="M8.500 0v16" stroke="#60e070"/><path d="M0 6l16 4" stroke="#ff5020"/></svg>Плоскость XY</li>
                <li><i class="h-full w-[23px] border-l border-dotted border-[#808080]"></i><i class="h-full w-[14px] border-l border-dotted border-[#808080]"><span class="block h-[11px] border-b border-dotted border-[#808080]"></span></i><svg class="mr-2 h-4 w-4" viewBox="0 0 16 16"><path d="M2.500 2.500l12 2v9l-12-2z" fill="#70ff70" stroke="#208020"/><path d="M8.500 0v16" stroke="#5060ff"/><path d="M0 6l16 4" stroke="#ff5020"/></svg>Плоскость ZX</li>
                <li><i class="h-full w-[23px] border-l border-dotted border-[#808080]"></i><i class="h-full w-[14px] border-l border-dotted border-[#808080]"><span class="block h-[11px] border-b border-dotted border-[#808080]"></span></i><svg class="mr-2 h-4 w-4" viewBox="0 0 16 16"><path d="M2.500 2.500l12 2v9l-12-2z" fill="#ff5000" stroke="#902000"/><path d="M8.500 0v16" stroke="#5060ff"/><path d="M0 6l16 4" stroke="#a0f080"/></svg>Плоскость ZY</li>
                <li><i class="h-full w-[23px] border-l border-dotted border-[#808080]"></i><i class="h-full w-[14px] border-l border-dotted border-[#808080]"><span class="block h-[11px] border-b border-dotted border-[#808080]"></span></i><svg class="mr-1.5 h-[18px] w-[18px]" viewBox="0 0 18 18"><path d="M1 1l5 5M8 8l1 1M11 11l5 5" stroke="#ff7030" stroke-width="2.200"/></svg>Ось X</li>
                <li><i class="h-full w-[23px] border-l border-dotted border-[#808080]"></i><i class="h-full w-[14px] border-l border-dotted border-[#808080]"><span class="block h-[11px] border-b border-dotted border-[#808080]"></span></i><svg class="mr-1.5 h-[18px] w-[18px]" viewBox="0 0 18 18"><path d="M1 1l5 5M8 8l1 1M11 11l5 5" stroke="#20a020" stroke-width="2.200"/></svg>Ось Y</li>
                <li><i class="h-full w-[23px] border-l border-dotted border-[#808080]"></i><i class="h-[11px] w-[14px] self-start border-b border-l border-dotted border-[#808080]"></i><svg class="mr-1.5 h-[18px] w-[18px]" viewBox="0 0 18 18"><path d="M1 1l5 5M8 8l1 1M11 11l5 5" stroke="#7020d0" stroke-width="2.200"/></svg>Ось Z</li>
                <li><i class="h-full w-[14px] border-l border-dotted border-[#808080]"><span class="block h-[11px] border-b border-dotted border-[#808080]"></span></i><svg class="mr-1.5 h-[18px] w-[18px]" viewBox="0 0 18 18"><path d="M2.500 2.500h6v7h7v6h-13z" fill="none" stroke="#404040"/><path d="M1 1h3v3H1zM7 1h3v3H7zM7 8h3v3H7zM14 8h3v3h-3zM1 14h3v3H1zM14 14h3v3h-3z" fill="#606060"/></svg>Эскиз:1</li>
                <li><i class="h-[11px] w-[14px] self-start border-b border-l border-dotted border-[#808080]"></i><svg class="mr-2 h-4 w-4"><use href="#cube"/></svg>Операция выдавливания:1</li>
              </ul>
              <div class="mx-1 -mt-px h-1 shrink-0 rounded-full border border-black bg-[#c0c0c0]"></div>
              <div class="mt-auto flex h-4 shrink-0 bg-[#e4e4e4] [&>button]:flex [&>button]:w-4 [&>button]:items-center [&>button]:justify-center [&>button]:border [&>button]:border-t-white [&>button]:border-r-black [&>button]:border-b-black [&>button]:border-l-white [&>button]:bg-[#c0c0c0]">
                <button aria-label="Прокрутить влево"><svg class="h-[7px] w-1" viewBox="0 0 4 7"><path d="M4 0v7L0 3.500z"/></svg></button>
                <span class="mr-1 flex-1 border border-t-white border-r-black border-b-black border-l-white bg-[#c0c0c0]"></span>
                <button aria-label="Прокрутить вправо"><svg class="h-[7px] w-1" viewBox="0 0 4 7"><path d="M0 0v7l4-3.500z"/></svg></button>
              </div>
            </div>
            <div class="mx-1 mt-[3px] h-[134px] shrink-0 border border-[#808080] bg-[#c0c0c0]"></div>
            <div class="mt-0.5 flex h-[21px] shrink-0 border-t border-black bg-linear-to-b from-white to-[#b4b4b4] pl-0.5">
              <button class="-mt-px border-r border-b border-l border-r-black border-b-black border-l-white bg-[#c8c8c8] px-1">Построение</button>
            </div>
          </div>

          <!-- Графическая область -->
          <div class="relative mx-0.5 min-w-0 flex-1 border border-t-black border-r-[#c0c0c0] border-b-[#c0c0c0] border-l-black bg-linear-to-b from-[#69a5e3] to-white">
            <svg class="absolute inset-0 h-full w-full" viewBox="235 119 784 531" fill="none">
              <path d="M656 292l125.500 72L656 436.500 530.500 364z" fill="#9c9c9c"/>
              <path d="M530.500 364L656 436.500V494l-125.500-72z" fill="#828282"/>
              <path d="M656 436.500L781.500 364v58L656 494z" fill="#555"/>
              <path d="M530.500 422v-58L656 292.500 781.500 364v58M530.500 364L656 436.500 781.500 364M656.500 436v58" stroke="#000"/>
              <path d="M656.500 391v31M593 386l-62 36 63 36M718 386l63 36-63 36" stroke="#0090ff"/>
              <path d="M718.500 385v-71L593 386M657 422l25 15M718 458L593.500 530V458" stroke="#80ff00"/>
              <path d="M593.500 458V314L718.500 385.500V530L593.500 458M656 422l-26 15" stroke="#ff8080"/>
              <path d="M656.500 436v57" stroke="#000"/>
            </svg>
            <svg class="absolute bottom-[22px] left-3.5 h-[62px] w-[68px]" viewBox="0 0 68 62" font-family="Liberation Serif" font-size="13">
              <path d="M29 19h5v20h-5z" fill="#0868c0"/><path d="M30 13h3l2 8h-7z" fill="#0090ff"/>
              <path d="M31 37l-17 9 2 3 16-8z" fill="#c00000"/><path d="M10 50l6-7 5 4-5 4z" fill="#f00000"/>
              <path d="M32 37l13 7-2 4-12-7z" fill="#00d000"/><path d="M53 50l-9-8-3 5 5 3z" fill="#00ff00"/>
              <text x="27" y="11" fill="#0090ff">Z</text><text x="0" y="59" fill="#ff0000">X</text><text x="54" y="59" fill="#00ff00">Y</text>
            </svg>
          </div>
        </div>
      </section>

      <!-- Панель свойств -->
      <section class="mt-[7px] mr-1.5 flex h-[58px] shrink-0">
        <span class="mr-[3px] h-[54px] w-0.5 bg-[repeating-linear-gradient(#808080_0_2px,transparent_2px_4px)]"></span>
        <div class="flex flex-1 flex-col">
          <div class="h-[34px] border-2 border-b-4 border-t-[#808080] border-r-[#b4b4b4] border-b-[#d8d8d8] border-l-[#808080] bg-linear-to-b from-white to-[#d4d4d4]"></div>
          <div class="flex-1 border-t border-black bg-linear-to-b from-white to-[#b0b0b0]"></div>
        </div>
      </section>
    </div>
  </main>

  <!-- Строка состояния -->
  <footer class="mt-1 flex h-[17px] shrink-0 gap-[3px] pl-1 leading-4">
    <p class="flex-1 border border-[#808080] pl-px">Щелкните левой кнопкой мыши на объекте для его выделения (вместе с Ctrl - добавить к выделенным)</p>
    <p class="w-[84px] border border-[#808080]"></p>
  </footer>

  <!-- Панель задач -->
  <div class="mt-px flex h-[27px] shrink-0 items-center border-t border-white bg-[#c0c0c0] px-0.5 font-['Liberation_Sans'] [&>button]:flex [&>button]:h-[22px] [&>button]:items-center [&>button]:gap-1 [&>button]:border [&>button]:border-t-white [&>button]:border-r-black [&>button]:border-b-black [&>button]:border-l-white [&>button]:pl-1 [&>button]:whitespace-nowrap">
    <button class="w-[52px] font-['DejaVu_Sans_Condensed'] font-bold"><svg class="size-4" viewBox="0 0 16 16"><path d="M1 3q3-3 6-1L6 7Q3 6 0 8z" fill="#f05020"/><path d="M8 2q4 2 7 0l-1 6q-4 1-7-1z" fill="#60c020"/><path d="M0 9q3-2 6 0l-1 5q-3-2-5 0z" fill="#2080f0"/><path d="M7 9q4 2 7 0l-1 5q-3 2-7 0z" fill="#f8c820"/></svg><span class="-ml-1">Пуск</span></button>
    <button class="ml-[5px] w-[159px] border-t-black! border-r-white! border-b-white! border-l-black! bg-[repeating-conic-gradient(#fff_0_25%,#c8c8c8_0_50%)] bg-size-[2px_2px] font-['DejaVu_Sans_Condensed'] font-bold"><svg class="size-4 [shape-rendering:auto]!"><use href="#kompas"/></svg>КОМПАС-3D V12 - Д...</button>
    <button class="ml-1 w-[159px]"><svg class="size-4" viewBox="0 0 16 16"><path d="M1.500 5.500h8v9h-8z" fill="#fff" stroke="#606060"/><path d="M3 8.500h4M3 10.500h4M3 12.500h4" stroke="#808080"/><g shape-rendering="auto"><path d="M7 5q0-3 4-3t4 3q0 2-4 3v2M10 13h3" fill="none" stroke="#000" stroke-width="4"/><path d="M7 5q0-3 4-3t4 3q0 2-4 3v2M10 13h3" fill="none" stroke="#ffff00" stroke-width="2.500"/></g></svg>КОМПАС-3D V12</button>
    <button class="ml-1 w-[159px]"><svg class="size-4" viewBox="0 0 16 16"><path d="M2 1l5 1v13l-5-1z" fill="#f8e490"/><path d="M7 2l3-1v13l-3 1z" fill="#d8b040"/><path d="M9 3l5 1v11l-5-1z" fill="#f0d468"/><path d="M11 13h2v3h-2z" fill="#40a0e0"/></svg>D:\Модели для Татьяны...</button>
    <button class="ml-1 w-[159px]"><svg class="size-4" viewBox="0 0 16 16"><path d="M4.500 1.500h10v13h-10z" fill="#fff" stroke="#6080c0"/><path d="M11 5.500h3M11 7.500h3M7 12.500h6" stroke="#4070d0"/><path d="M0 2h10v9H0z" fill="#3060c8"/><path d="M2 4l1 5 2-4 2 4 1-5" fill="none" stroke="#fff" shape-rendering="auto"/></svg>Методичка_КОМПАС.do...</button>
    <div class="ml-auto flex h-[22px] w-[166px] items-center gap-0.5 border border-t-[#808080] border-r-white border-b-white border-l-[#808080] pl-1">
      <svg class="h-[7px] w-2 shrink-0" viewBox="0 0 8 7"><path d="M3.500 0L.5 3.500l3 3.500M7.500 0l-3 3.500 3 3.500" fill="none" stroke="#000" stroke-width="1.500"/></svg>
      <svg class="ml-0.5 h-4 w-4 [shape-rendering:auto]!" viewBox="0 0 16 16"><circle cx="6.500" cy="6.500" r="6" fill="#88d010"/><circle cx="8" cy="8" r="6.500" fill="#80cc10"/><circle cx="11.500" cy="11.500" r="4" fill="#78c010"/><path d="M5 8l2 3 5-6" fill="none" stroke="#fff" stroke-width="2"/></svg>
      <svg class="size-4" viewBox="0 0 16 16"><path d="M1 1h13v7h2v7H8l-7-1z" fill="#fff"/><path d="M2 1h3v6l5-6h4L5 13H2z" fill="#f00000"/><path d="M7 7l5 4V8h3v7H9l2-2-4-3z"/></svg>
      <span class="flex h-[11px] w-4 items-center justify-center bg-[#38a010] text-[9px] font-bold text-white">ovi</span>
      <svg class="size-4 [shape-rendering:auto]!" viewBox="0 0 16 16"><circle cx="8" cy="8" r="7.500" fill="#80b8e8"/><circle cx="8" cy="8" r="5" fill="none" stroke="#d0e8ff"/><path d="M6 1h4v3H6zM6 5h4v9H6z" fill="#ff9a30"/></svg>
      <span class="flex h-4 w-4 items-center justify-center bg-[#808080] text-[12px] text-white">Ru</span>
      <svg class="size-4 [shape-rendering:auto]!" viewBox="0 0 16 16"><circle cx="8" cy="8" r="7.500" fill="#0000b0"/><path d="M3 2l5-1 2 3-3 2-1 3-4 0-1-4zM7 9l4 1-2 5-2-1z" fill="#20d060"/><path d="M5 3h3v2H5z" fill="#80f0ff"/></svg>
      <time class="ml-1">12:51</time>
    </div>
  </div>
</body>
</html>
